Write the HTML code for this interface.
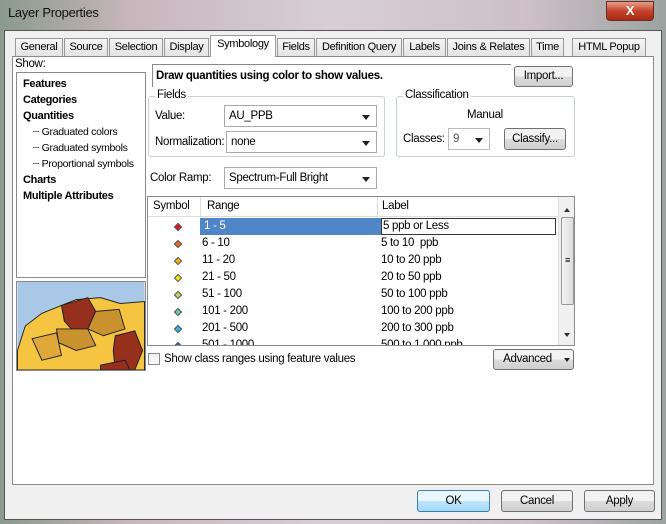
<!DOCTYPE html>
<html><head><meta charset="utf-8"><style>
*{box-sizing:border-box;margin:0;padding:0}
body{width:666px;height:524px;overflow:hidden;font-family:"Liberation Sans",sans-serif;font-size:11.5px;letter-spacing:-0.3px;color:#000;position:relative;background:linear-gradient(90deg,#8a9a8c 0,#c9b6bd 20%,#d8cfd6 50%,#cdbec7 80%,#9aa3a0 100%)}
.a{position:absolute}
.title{left:8px;top:5px;font-size:13px;color:#111}
.close{left:606px;top:1px;width:48px;height:20px;border-radius:0 0 4px 4px;background:linear-gradient(#e8a08c,#c4432a 50%,#a82a14);border:1px solid #6a2a20;color:#fff;font-weight:bold;text-align:center;font-size:13px;line-height:18px}
.dlg{left:4px;top:30px;width:658px;height:490px;background:#f0f0f0;border:1px solid #555}
.tab{position:absolute;top:38px;height:19px;border:1px solid #999;border-bottom:none;background:linear-gradient(#f6f6f6,#e2e2e2);font-size:11px;text-align:center;line-height:17px;white-space:nowrap}
.panel{left:12px;top:56px;width:642px;height:429px;background:#fff;border:1px solid #8a8a8a}
.box{border:1px solid #8a8a8a;background:#fff}
.btn{position:absolute;border:1px solid #707070;border-radius:3px;background:linear-gradient(#f2f2f2 50%,#dcdcdc 50%,#cfcfcf);text-align:center}
.grp{position:absolute;border:1px solid #c8d0d8;border-radius:3px}
.gl{position:absolute;top:-8px;left:6px;background:#fff;padding:0 2px}
.cmb{position:absolute;border:1px solid #aaa;background:#fff;padding-left:4px;line-height:20px;height:22px}
.cmb:after{content:"";position:absolute;right:6px;top:9px;border:4px solid transparent;border-top:5px solid #222}
.row{position:absolute;left:0;height:17px;line-height:17px;width:410px}
.dot{position:absolute;left:27px;top:6px;width:6px;height:6px;transform:rotate(45deg);border:1px solid #555}
</style></head><body>
<div class="a title">Layer Properties</div>
<div class="a close">X</div>
<div class="a dlg"></div>
<div class="tab" style="left:15px;width:48px">General</div>
<div class="tab" style="left:64px;width:44px">Source</div>
<div class="tab" style="left:109px;width:54px">Selection</div>
<div class="tab" style="left:164px;width:45px">Display</div>
<div class="tab" style="left:210px;width:66px;top:35px;height:22px;background:#fff;z-index:2">Symbology</div>
<div class="tab" style="left:277px;width:38px">Fields</div>
<div class="tab" style="left:316px;width:86px">Definition Query</div>
<div class="tab" style="left:403px;width:43px">Labels</div>
<div class="tab" style="left:447px;width:83px">Joins &amp; Relates</div>
<div class="tab" style="left:531px;width:33px">Time</div>
<div class="tab" style="left:572px;width:74px">HTML Popup</div>
<div class="a panel"></div>
<div class="a" style="left:15px;top:58px">Show:</div>
<div class="a box" style="left:16px;top:72px;width:130px;height:206px;line-height:16px;padding:3px 0 0 6px;white-space:nowrap;font-size:11px">
<b>Features</b><br><b>Categories</b><br><b>Quantities</b><br>
<div style="margin-left:10px;font-size:10.5px">
<div>┈ Graduated colors</div><div>┈ Graduated symbols</div><div>┈ Proportional symbols</div></div>
<b>Charts</b><br><b>Multiple Attributes</b></div>
<svg class="a" style="left:16px;top:281px;border:1px solid #888" width="130" height="90" viewBox="0 0 130 90">
<rect width="130" height="90" fill="#a9c8e8"/>
<path d="M0,70 L8,45 25,32 45,24 60,18 85,16 105,22 130,20 130,90 0,90Z" fill="#f5c542" stroke="#222"/>
<path d="M45,24 L72,16 80,30 72,48 55,48 48,40Z" fill="#962f1c" stroke="#222"/>
<path d="M80,30 L104,28 110,48 88,55 72,48Z" fill="#c9922e" stroke="#222"/>
<path d="M100,55 L120,50 128,70 120,90 100,90 98,70Z" fill="#962f1c" stroke="#222"/>
<path d="M40,48 L72,48 80,65 60,70 42,62Z" fill="#c9922e" stroke="#222"/>
<path d="M15,58 L40,52 45,75 25,80Z" fill="#e0a83a" stroke="#222"/>
<path d="M85,85 L110,80 115,90 85,90Z" fill="#962f1c" stroke="#222"/>
</svg>
<div class="a" style="left:152px;top:64px;width:359px;height:23px;border-top:1px solid #888;border-left:1px solid #888;font-weight:bold;padding:5px 0 0 3px">Draw quantities using color to show values.</div>
<div class="btn" style="left:514px;top:66px;width:59px;height:21px;line-height:19px">Import...</div>
<div class="grp" style="left:148px;top:96px;width:237px;height:61px"><span class="gl">Fields</span></div>
<div class="a" style="left:155px;top:110px">Value:</div>
<div class="cmb" style="left:224px;top:105px;width:153px">AU_PPB</div>
<div class="a" style="left:155px;top:136px">Normalization:</div>
<div class="cmb" style="left:226px;top:131px;width:151px">none</div>
<div class="grp" style="left:396px;top:96px;width:179px;height:61px"><span class="gl">Classification</span></div>
<div class="a" style="left:467px;top:109px">Manual</div>
<div class="a" style="left:403px;top:133px">Classes:</div>
<div class="cmb" style="left:448px;top:128px;width:42px;color:#555;border-color:#bbb">9</div>
<div class="btn" style="left:504px;top:128px;width:62px;height:22px;line-height:20px">Classify...</div>
<div class="a" style="left:150px;top:172px">Color Ramp:</div>
<div class="cmb" style="left:224px;top:167px;width:153px">Spectrum-Full Bright</div>
<div class="a box" style="left:147px;top:196px;width:428px;height:150px;overflow:hidden">
<div class="a" style="left:0;top:0;width:410px;height:20px;border-bottom:1px solid #ddd;background:#fff;line-height:19px">
<span class="a" style="left:5px">Symbol</span><span class="a" style="left:52px;border-left:1px solid #ddd;padding-left:6px;height:20px">Range</span><span class="a" style="left:229px;border-left:1px solid #ddd;padding-left:4px;height:20px">Label</span></div>
<div class="row" style="top:21px"><i class="dot" style="background:#d62020"></i><span class="a" style="left:52px;width:182px;background:#4f86c8;color:#fff;padding-left:4px">1 - 5</span><span class="a" style="left:233px;width:175px;border:1px solid #333;height:17px;line-height:15px;padding-left:1px">5 ppb or Less</span></div>
<div class="row" style="top:38px"><i class="dot" style="background:#e86a2a"></i><span class="a" style="left:54px">6 - 10</span><span class="a" style="left:233px">5 to 10 &nbsp;ppb</span></div>
<div class="row" style="top:55px"><i class="dot" style="background:#f2b418"></i><span class="a" style="left:54px">11 - 20</span><span class="a" style="left:233px">10 to 20 ppb</span></div>
<div class="row" style="top:72px"><i class="dot" style="background:#f2e41a"></i><span class="a" style="left:54px">21 - 50</span><span class="a" style="left:233px">20 to 50 ppb</span></div>
<div class="row" style="top:89px"><i class="dot" style="background:#b8d66a"></i><span class="a" style="left:54px">51 - 100</span><span class="a" style="left:233px">50 to 100 ppb</span></div>
<div class="row" style="top:106px"><i class="dot" style="background:#6cc4b0"></i><span class="a" style="left:54px">101 - 200</span><span class="a" style="left:233px">100 to 200 ppb</span></div>
<div class="row" style="top:123px"><i class="dot" style="background:#38b4e0"></i><span class="a" style="left:54px">201 - 500</span><span class="a" style="left:233px">200 to 300 ppb</span></div>
<div class="row" style="top:140px"><i class="dot" style="background:#3a6ad0"></i><span class="a" style="left:54px">501 - 1000</span><span class="a" style="left:233px">500 to 1,000 ppb</span></div>
<div class="a" style="left:410px;top:0;width:17px;height:148px;background:#f0f0f0;border-left:1px solid #e0e0e0">
<div class="a" style="left:2px;top:20px;width:13px;height:88px;border:1px solid #999;border-radius:2px;background:linear-gradient(90deg,#f4f4f4,#dcdcdc);text-align:center;line-height:84px;font-size:9px">≡</div>
<div class="a" style="left:5px;top:8px;border:3px solid transparent;border-bottom:4px solid #333"></div>
<div class="a" style="left:5px;top:136px;border:3px solid transparent;border-top:4px solid #333"></div>
</div></div>
<div class="a" style="left:148px;top:353px;width:12px;height:12px;border:1px solid #888;background:linear-gradient(#eee,#fff)"></div>
<div class="a" style="left:164px;top:353px">Show class ranges using feature values</div>
<div class="btn" style="left:493px;top:349px;width:81px;height:21px;line-height:19px;padding-right:12px">Advanced<span class="a" style="right:3px;top:8px;border:3px solid transparent;border-top:4px solid #222"></span></div>
<div class="btn" style="left:417px;top:490px;width:73px;height:22px;line-height:20px;border-color:#3c7fb1;background:linear-gradient(#eaf6fd 50%,#bee6fd 50%,#a7d9f5)">OK</div>
<div class="btn" style="left:501px;top:490px;width:72px;height:22px;line-height:20px">Cancel</div>
<div class="btn" style="left:584px;top:490px;width:71px;height:22px;line-height:20px">Apply</div>
</body></html>
